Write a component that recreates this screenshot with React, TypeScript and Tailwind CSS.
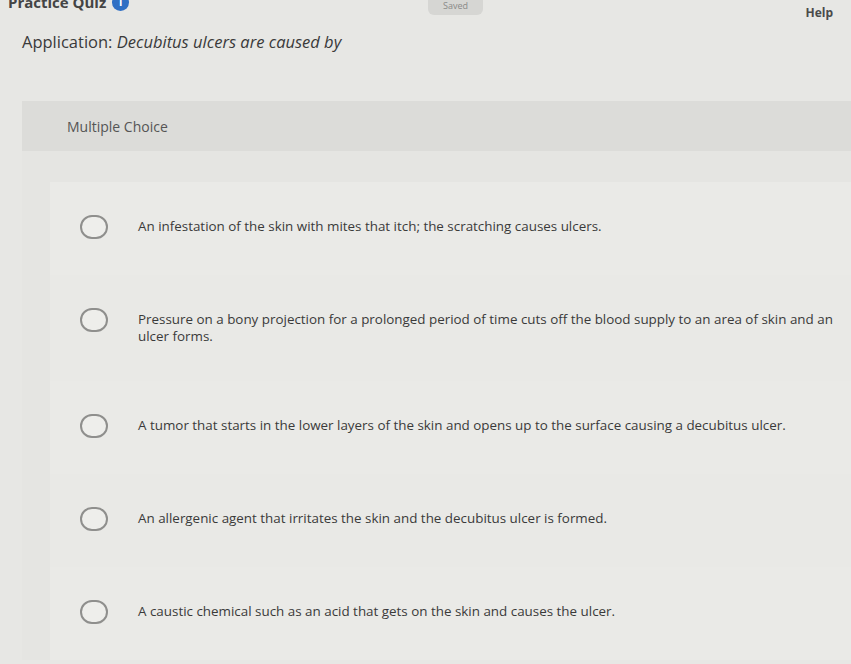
import React from 'react';

const options = [
  'An infestation of the skin with mites that itch; the scratching causes ulcers.',
  'Pressure on a bony projection for a prolonged period of time cuts off the blood supply to an area of skin and an ulcer forms.',
  'A tumor that starts in the lower layers of the skin and opens up to the surface causing a decubitus ulcer.',
  'An allergenic agent that irritates the skin and the decubitus ulcer is formed.',
  'A caustic chemical such as an acid that gets on the skin and causes the ulcer.',
];

export default function App() {
  return (
    <div
      className="w-[851px] h-[664px] overflow-hidden bg-[#e7e7e4] text-[#3b3b3b]"
      style={{ fontFamily: '"Open Sans", Lato, Arial, sans-serif' }}
    >
      {/* top bar */}
      <div className="h-[30px] flex items-start pl-[8px] pr-[18px]">
        <div className="w-[420px] flex items-center gap-[6px] -mt-[9px]">
          <span className="text-[15px] font-bold text-[#444]">Practice Quiz</span>
          <span className="w-[17px] h-[17px] rounded-full bg-[#2f6fc4] text-white text-[11px] font-bold flex items-center justify-center">i</span>
        </div>
        <div className="-mt-[6px] px-[15px] pt-[6px] pb-[4px] rounded-[6px] bg-[#d6d6d3] text-[9px] leading-[11px] text-[#8a8a88]">Saved</div>
        <div className="flex-1 flex justify-end mt-[4px] text-[12px] font-bold text-[#4a4a4a]">Help</div>
      </div>

      {/* question */}
      <div className="pl-[22px] text-[16.5px] leading-[24px] text-[#3a3a3a]">
        Application: <span className="italic">Decubitus ulcers are caused by</span>
      </div>

      {/* panel */}
      <div className="mt-[47px] ml-[22px] bg-[#e5e5e2]">
        <div className="h-[50px] bg-[#dcdcd9] flex items-center pl-[45px] text-[14px] text-[#555]">
          Multiple Choice
        </div>
        <div className="pt-[31px] pl-[28px]">
          {options.map((o, i) => (
            <div
              key={i}
              className={`flex items-start gap-[30px] pl-[30px] pr-[14px] py-[36px] ${i % 2 === 0 ? 'bg-[#eaeae7]' : 'bg-[#e9e9e6]'}`}
            >
              <div className="w-[28px] h-[24px] shrink-0 rounded-full border-2 border-[#8f8f8d] bg-[#eeeeeb] -mt-[3px]" />
              <div className="text-[13.4px] leading-[17px] text-[#3a3a3a]">{o}</div>
            </div>
          ))}
        </div>
      </div>
    </div>
  );
}
